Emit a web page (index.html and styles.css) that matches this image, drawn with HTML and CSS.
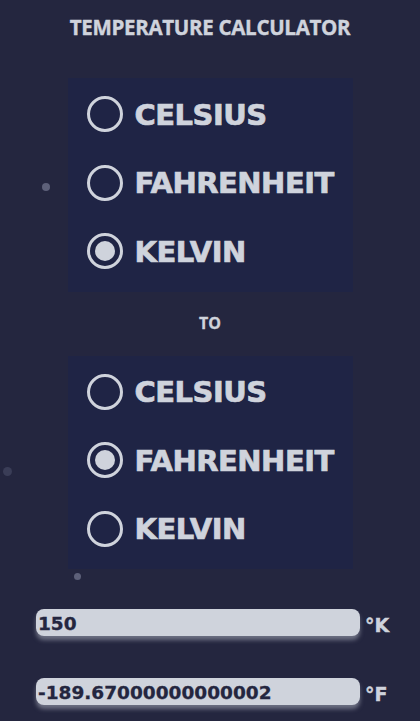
FILE: index.html
```html
<!DOCTYPE html>
<html>
<head>
<meta charset="utf-8">
<link rel="stylesheet" href="styles.css">
</head>
<body>
<div class="app">
  <span class="dot dot1"></span>
  <span class="dot dot2"></span>
  <span class="dot dot3"></span>
  <h1 class="title">TEMPERATURE CALCULATOR</h1>
  <div class="panel">
    <label class="opt"><input type="radio" name="from" class="radio"><span>CELSIUS</span></label>
    <label class="opt"><input type="radio" name="from" class="radio"><span>FAHRENHEIT</span></label>
    <label class="opt"><input type="radio" name="from" class="radio" checked><span>KELVIN</span></label>
  </div>
  <div class="to">TO</div>
  <div class="panel panel2">
    <label class="opt"><input type="radio" name="to" class="radio"><span>CELSIUS</span></label>
    <label class="opt"><input type="radio" name="to" class="radio" checked><span>FAHRENHEIT</span></label>
    <label class="opt"><input type="radio" name="to" class="radio"><span>KELVIN</span></label>
  </div>
  <div class="field first">
    <input class="num" type="text" value="150">
    <span class="unit">°K</span>
  </div>
  <div class="field second">
    <input class="num" type="text" value="-189.67000000000002">
    <span class="unit">°F</span>
  </div>
</div>
</body>
</html>
```
FILE: styles.css
```css
html, body {
  margin: 0;
  padding: 0;
  background: #24263f;
  height: 100%;
}
.app {
  position: relative;
  width: 420px;
  height: 721px;
  overflow: hidden;
  color: #cfd3dc;
  font-family: "DejaVu Sans", sans-serif;
}
.dot {
  position: absolute;
  border-radius: 50%;
  background: #5d6079;
}
.dot1 { left: 42px; top: 183px; width: 8px; height: 8px; }
.dot2 { left: 3px; top: 467px; width: 9px; height: 9px; background: #3a3d57; }
.dot3 { left: 74px; top: 573px; width: 7px; height: 7px; }
.title {
  margin: 15px 0 0;
  font-family: "Open Sans", sans-serif;
  font-weight: 700;
  font-size: 20.5px;
  line-height: 24px;
  text-align: center;
  letter-spacing: -0.3px;
  -webkit-text-stroke: 0.4px #cfd3dc;
}
.panel {
  width: 285px;
  margin: 39px auto 0;
  padding: 2px 0 6px;
  background: #1f2445;
  box-sizing: border-box;
  padding-left: 19px;
}
.panel2 { margin-top: 23px; }
.opt {
  height: 68.5px;
  display: flex;
  align-items: center;
  gap: 12px;
  font-weight: 700;
  font-size: 29px;
  letter-spacing: -0.5px;
}
.opt span {
  line-height: 1;
  padding-top: 2px;
  -webkit-text-stroke: 0.7px #cfd3dc;
}
.radio {
  appearance: none;
  -webkit-appearance: none;
  margin: 0;
  width: 36px;
  height: 36px;
  border: 3.5px solid #cfd3dc;
  border-radius: 50%;
  box-sizing: border-box;
  display: grid;
  place-items: center;
  flex: none;
}
.radio:checked::after {
  content: "";
  width: 20px;
  height: 20px;
  border-radius: 50%;
  background: #cfd3dc;
}
.to {
  margin-top: 21px;
  text-align: center;
  font-weight: 700;
  font-size: 16px;
  line-height: 20px;
  font-family: "Open Sans", sans-serif;
  -webkit-text-stroke: 0.3px #cfd3dc;
}
.field {
  display: flex;
  align-items: center;
  gap: 5px;
  padding-left: 36px;
}
.field.first { margin-top: 40px; }
.field.second { margin-top: 42px; }
.num {
  width: 324px;
  height: 27px;
  box-sizing: border-box;
  border: none;
  border-radius: 8px;
  background: #cfd3dc;
  color: #24263f;
  font-family: "DejaVu Sans", sans-serif;
  font-weight: 700;
  font-size: 18.5px;
  padding: 2px 2px 0;
  box-shadow: 0 4px 4px #6d7083;
  outline: none;
  -webkit-text-stroke: 0.3px #24263f;
}
.unit {
  font-weight: 700;
  font-size: 19px;
  padding-top: 5px;
  color: #cfd3dc;
  -webkit-text-stroke: 0.4px #cfd3dc;
}
```
